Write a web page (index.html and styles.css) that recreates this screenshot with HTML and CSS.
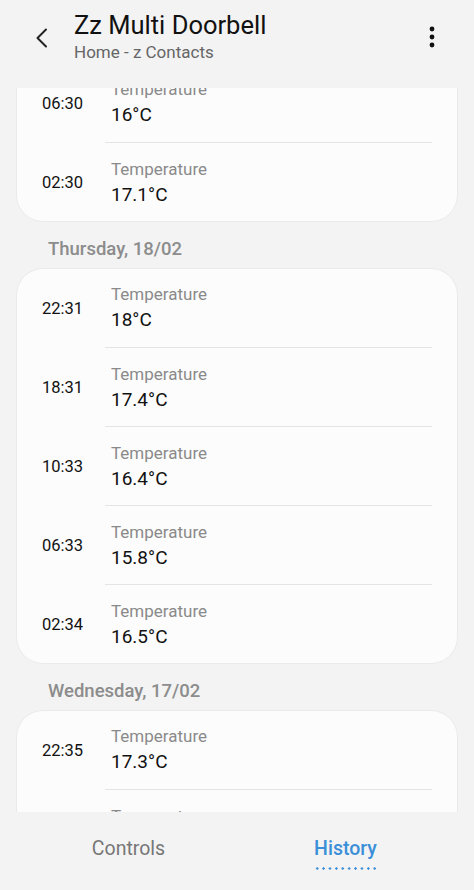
FILE: index.html
```html
<!DOCTYPE html>
<html lang="en">
<head>
  <meta charset="UTF-8" />
  <meta name="viewport" content="width=device-width, initial-scale=1.0"/>
  <title>Zz Multi Doorbell</title>
  <link rel="stylesheet" href="styles.css">
</head>
<body>
  <div class="screen">
    <header class="topbar">
      <button class="icon-btn back" aria-label="Back">
        <svg width="14" height="20" viewBox="0 0 14 20"><path d="M11 1.5 L2.5 10 L11 18.5" fill="none" stroke="#222" stroke-width="2" stroke-linecap="round" stroke-linejoin="round"/></svg>
      </button>
      <div class="titles">
        <h1>Zz Multi Doorbell</h1>
        <div class="subtitle">Home - z Contacts</div>
      </div>
      <button class="icon-btn more" aria-label="More options">
        <svg width="6" height="22" viewBox="0 0 6 22"><circle cx="3" cy="3" r="2.4" fill="#111"/><circle cx="3" cy="11" r="2.4" fill="#111"/><circle cx="3" cy="19" r="2.4" fill="#111"/></svg>
      </button>
    </header>

    <main class="history">
      <div class="scroll">
        <section class="card first">
          <div class="row"><span class="time">06:30</span><div class="entry"><div class="label">Temperature</div><div class="value">16°C</div></div></div>
          <div class="row"><span class="time">02:30</span><div class="entry"><div class="label">Temperature</div><div class="value">17.1°C</div></div></div>
        </section>

        <h2 class="day">Thursday, 18/02</h2>
        <section class="card">
          <div class="row"><span class="time">22:31</span><div class="entry"><div class="label">Temperature</div><div class="value">18°C</div></div></div>
          <div class="row"><span class="time">18:31</span><div class="entry"><div class="label">Temperature</div><div class="value">17.4°C</div></div></div>
          <div class="row"><span class="time">10:33</span><div class="entry"><div class="label">Temperature</div><div class="value">16.4°C</div></div></div>
          <div class="row"><span class="time">06:33</span><div class="entry"><div class="label">Temperature</div><div class="value">15.8°C</div></div></div>
          <div class="row"><span class="time">02:34</span><div class="entry"><div class="label">Temperature</div><div class="value">16.5°C</div></div></div>
        </section>

        <h2 class="day">Wednesday, 17/02</h2>
        <section class="card">
          <div class="row"><span class="time">22:35</span><div class="entry"><div class="label">Temperature</div><div class="value">17.3°C</div></div></div>
          <div class="row"><span class="time"></span><div class="entry"><div class="label">Temperature</div></div></div>
        </section>
      </div>
    </main>

    <nav class="tabs">
      <a class="tab">Controls</a>
      <a class="tab active">History</a>
    </nav>
  </div>
</body>
</html>
```

FILE: styles.css
```css
* {
  box-sizing: border-box;
}
body {
  margin: 0;
  font-family: Roboto, "Noto Sans", Arial, sans-serif;
  background-color: #f3f3f3;
  color: #111;
}
.screen {
  display: flex;
  flex-direction: column;
  height: 890px;
  width: 474px;
  overflow: hidden;
}

/* header */
.topbar {
  flex: none;
  height: 88px;
  display: flex;
  align-items: flex-start;
  padding: 9px 0 0 0;
  background-color: #f3f3f3;
  position: relative;
  z-index: 1;
}
.icon-btn {
  background: none;
  border: none;
  padding: 0;
  display: flex;
  align-items: center;
  justify-content: center;
}
.back {
  width: 74px;
  height: 58px;
  padding-left: 10px;
}
.titles {
  flex: 1;
}
.titles h1 {
  margin: 0;
  font-size: 25.5px;
  font-weight: 400;
  line-height: 32px;
  color: #111;
}
.subtitle {
  font-size: 17px;
  line-height: 22px;
  color: #666;
}
.more {
  width: 84px;
  height: 56px;
}

/* scrolling list */
.history {
  flex: 1;
  overflow: hidden;
}
.scroll {
  margin-top: -24px;
  padding: 0 17px;
}
.card {
  background-color: #fcfcfc;
  border-radius: 26px;
  box-shadow: 0 0 0 1px rgba(0, 0, 0, 0.035);
}
.card.first {
  border-top-left-radius: 0;
  border-top-right-radius: 0;
}
.row {
  display: flex;
  align-items: stretch;
}
.time {
  width: 88px;
  padding-left: 25px;
  display: flex;
  align-items: center;
  font-size: 16.5px;
  color: #111;
}
.entry {
  flex: 1;
  margin-right: 25px;
  padding: 15px 0 15px 6px;
  height: 78px;
}
.row + .row .time {
  padding-top: 1px;
}
.row + .row .entry {
  border-top: 1px solid #e4e4e4;
  height: 79px;
  padding-top: 16px;
}
.label {
  font-size: 17px;
  line-height: 20px;
  color: #8a8a8a;
}
.value {
  margin-top: 4px;
  font-size: 19px;
  line-height: 24px;
  color: #111;
}
.day {
  margin: 0;
  height: 48px;
  padding: 17px 0 0 31px;
  font-size: 18.5px;
  font-weight: 500;
  line-height: 22px;
  color: #8c8c8c;
}

/* bottom tabs */
.tabs {
  flex: none;
  height: 78px;
  display: flex;
  padding: 0 20px;
  background-color: #f3f3f3;
  position: relative;
  z-index: 1;
}
.tab {
  flex: 1;
  text-align: center;
  padding-top: 25px;
  font-size: 19.5px;
  line-height: 24px;
  color: #777;
}
.tab.active {
  color: #3b8fd8;
  font-weight: 500;
}
.tab.active::after {
  content: "";
  display: block;
  width: 64px;
  height: 3px;
  margin: 6px auto 0;
  background-image: radial-gradient(circle, #3b8fd8 1.1px, transparent 1.4px);
  background-size: 6.4px 3px;
}
```
